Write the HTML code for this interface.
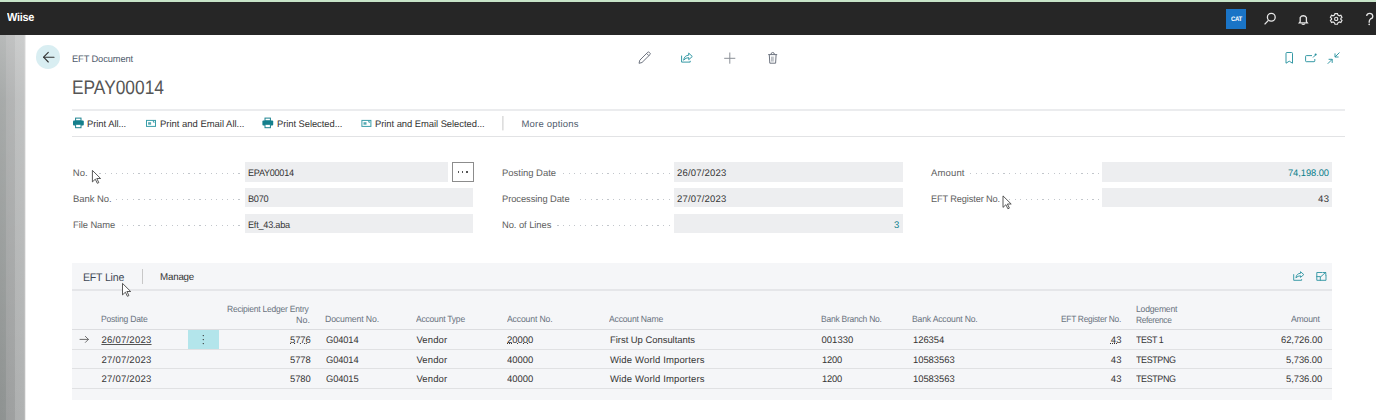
<!DOCTYPE html>
<html><head><meta charset="utf-8">
<style>
*{margin:0;padding:0;box-sizing:border-box}
html,body{width:1376px;height:420px;overflow:hidden;background:#fff;font-family:"Liberation Sans",sans-serif;color:#212121;position:relative}
.a{position:absolute}
.t{position:absolute;white-space:nowrap;font-family:"Liberation Sans",sans-serif;text-rendering:geometricPrecision}
.hl{position:absolute;height:1px;background:#e3e3e3}
.box{position:absolute;height:20px;background:#edeef0}
svg{position:absolute;overflow:visible}
</style></head><body>
<!-- top -->
<div class="a" style="left:0;top:0;width:1376px;height:2px;background:#c7e4c8"></div>
<div class="a" style="left:0;top:2px;width:1376px;height:33px;background:#262626"></div>
<div class="a" style="left:1226px;top:9px;width:20px;height:20px;background:#1a74c6"></div>
<svg style="left:0;top:0" width="1376" height="35">
  <g fill="none" stroke="#e8e8e8" stroke-width="1.3">
    <circle cx="1271.3" cy="17.3" r="3.9"/>
    <line x1="1264.6" y1="24.4" x2="1268.4" y2="20.4"/>
    <path d="M1299.3 22.8 L1300.2 21.6 V17.5 A3.6 3.6 0 0 1 1306.4 17.5 V21.6 L1307.3 22.8 Z"/>
    <path d="M1301.6 23.6 Q1303.3 25.2 1305 23.6"/>
    <path d="M1366.6 15.8 A3.1 2.8 0 1 1 1370.5 18.9 Q1369.2 19.9 1369.2 21.8 V22.7"/>
  </g>
  <circle cx="1369.2" cy="24.4" r="0.8" fill="#e8e8e8"/>
  <g transform="translate(1336.2 18.9) scale(0.95)" fill="none" stroke="#e8e8e8" stroke-width="1.2">
    <path d="M-1.3 -5.6 L1.3 -5.6 L1.8 -4.1 L3.4 -3.2 L4.9 -3.8 L6.1 -1.6 L4.9 -0.6 L4.9 0.6 L6.1 1.6 L4.9 3.8 L3.4 3.2 L1.8 4.1 L1.3 5.6 L-1.3 5.6 L-1.8 4.1 L-3.4 3.2 L-4.9 3.8 L-6.1 1.6 L-4.9 0.6 L-4.9 -0.6 L-6.1 -1.6 L-4.9 -3.8 L-3.4 -3.2 L-1.8 -4.1 Z"/>
    <circle r="1.7"/>
  </g>
</svg>
<!-- left strip -->
<div class="a" style="left:0;top:35px;width:25px;height:385px;background:linear-gradient(180deg,rgba(255,255,255,.36) 0px,rgba(255,255,255,.22) 65px,rgba(255,255,255,.0) 385px),linear-gradient(90deg,#8e9291 0px,#909493 6px,#9c9e9e 6px,#9fa1a1 15px,#adafaf 15px,#b0b2b2 24px,#c4c4c4 25px)"></div>
<div class="a" style="left:25px;top:35px;width:1px;height:385px;background:#ececec"></div>
<!-- header -->
<div class="a" style="left:36.2px;top:45.2px;width:23.6px;height:23.6px;border-radius:50%;background:#d9eef2"></div>
<svg style="left:0;top:0" width="1376" height="110">
  <g fill="none" stroke="#333" stroke-width="1.1" stroke-linecap="round" stroke-linejoin="round">
    <path d="M43.6 57.2 H54"/>
    <path d="M48.3 52.4 L43.6 57.2 L48.3 62"/>
  </g>
  <!-- pencil -->
  <g fill="none" stroke="#6e7480" stroke-width="1">
    <path d="M639 63.3 L639.8 60.2 L647.8 52.2 Q648.6 51.6 649.4 52.4 L650.1 53.1 Q650.7 53.9 650 54.6 L642 62.5 Z"/>
    <path d="M646.6 53.4 L648.9 55.7"/>
  </g>
  <!-- share -->
  <g fill="none" stroke="#2a93a0" stroke-width="0.95" stroke-linejoin="round">
    <path d="M681.6 55.6 V62.1 H690.2 V60.8"/>
    <path d="M683.6 60.2 Q684.4 55.4 688.7 55.2 V53.1 L692.3 56.5 L688.7 59.7 V57.6 Q685.8 57.6 683.6 60.2 Z"/>
  </g>
  <!-- plus -->
  <g stroke="#8a8f96" stroke-width="1">
    <path d="M724.2 58.3 H735.3"/>
    <path d="M729.8 52.5 V63.7"/>
  </g>
  <!-- trash -->
  <g fill="none" stroke="#6e7480" stroke-width="1">
    <path d="M768.2 54.6 H777.2"/>
    <path d="M769.3 54.8 L769.8 63.2 H775.6 L776.1 54.8"/>
    <path d="M771 54.4 Q771 52.5 772.7 52.5 Q774.4 52.5 774.4 54.4"/>
  </g>
  <rect x="771.3" y="56.6" width="1.3" height="5" fill="#9aa0a8"/>
  <rect x="772.8" y="56.6" width="1.3" height="5" fill="#c8ccd0"/>
  <!-- bookmark -->
  <g fill="none" stroke="#2a93a0" stroke-width="0.95" stroke-linejoin="round">
    <path d="M1286 63.2 V53.4 Q1286 52.5 1287 52.5 H1291.5 Q1292.5 52.5 1292.5 53.4 V63.2 L1289.25 61.2 Z"/>
  </g>
  <!-- popout -->
  <g fill="none" stroke="#2a93a0" stroke-width="0.95" stroke-linejoin="round">
    <path d="M1312 55.6 H1306.4 Q1305.6 55.6 1305.6 56.4 V60.9 Q1305.6 61.7 1306.4 61.7 H1314 Q1314.8 61.7 1314.8 60.9 V59"/>
    <path d="M1313 57.5 L1316 54.5"/>
  </g>
  <circle cx="1315.6" cy="54.6" r="1" fill="#2a93a0"/>
  <!-- collapse -->
  <g fill="none" stroke="#2a93a0" stroke-width="0.95" stroke-linecap="round" stroke-linejoin="round">
    <path d="M1339.2 52.8 L1335.2 56.8"/>
    <path d="M1335 53.8 V57 H1338.2"/>
    <path d="M1328 63.5 L1332 59.5"/>
    <path d="M1329 59.3 H1332.2 V62.5"/>
  </g>
</svg>
<div class="hl" style="left:72px;top:109px;width:1273px;height:2px;background:#ebecee"></div>
<div class="hl" style="left:72px;top:136px;width:1273px;background:#e2e3e5"></div>
<svg style="left:0;top:0" width="1376" height="140">
  <!-- printer icons -->
  <g>
    <rect x="75.6" y="118.1" width="5.4" height="2.8" fill="none" stroke="#1d8390" stroke-width="1"/>
    <rect x="73.0" y="120.6" width="10.8" height="4.8" rx="1" fill="#137f8c"/>
    <rect x="75.6" y="124.3" width="5.4" height="3.4" fill="#fff" stroke="#1d8390" stroke-width="1"/>
  </g>
  <g>
    <rect x="265.0" y="118.1" width="5.4" height="2.8" fill="none" stroke="#1d8390" stroke-width="1"/>
    <rect x="262.4" y="120.6" width="10.8" height="4.8" rx="1" fill="#137f8c"/>
    <rect x="265.0" y="124.3" width="5.4" height="3.4" fill="#fff" stroke="#1d8390" stroke-width="1"/>
  </g>
  <!-- email-doc icons -->
  <g fill="none" stroke="#3a9ea9" stroke-width="1">
    <rect x="146.5" y="120.4" width="9" height="6"/>
    <path d="M153.4 120.4 V122.2 H154.6"/>
  </g>
  <rect x="148.1" y="122.2" width="3" height="2.5" fill="#55aab3"/>
  <g fill="none" stroke="#3a9ea9" stroke-width="1">
    <rect x="361.9" y="120.4" width="9" height="6"/>
    <path d="M368.8 120.4 V122.2 H370.0"/>
  </g>
  <rect x="363.5" y="122.2" width="3" height="2.5" fill="#55aab3"/>
  <rect x="502.4" y="116" width="1" height="14.4" fill="#c8c8c8"/>
</svg>
<!-- fields -->
<div class="box" style="left:244.6px;top:162.2px;width:203.2px;height:19.6px"></div>
<div class="a" style="left:452px;top:162px;width:22px;height:20px;border:1px solid #8c8c8c;background:#fff"></div>
<div class="a" style="left:457.8px;top:171.4px;width:1.4px;height:1.4px;background:#555"></div>
<div class="a" style="left:462.1px;top:171.4px;width:1.4px;height:1.4px;background:#555"></div>
<div class="a" style="left:466.4px;top:171.4px;width:1.4px;height:1.4px;background:#555"></div>
<div class="box" style="left:244.6px;top:188.4px;width:228.9px;height:19px"></div>
<div class="box" style="left:244.6px;top:214.2px;width:228.9px;height:18.8px"></div>
<div class="box" style="left:673.6px;top:162.2px;width:229.6px;height:19.6px"></div>
<div class="box" style="left:673.6px;top:188.4px;width:229.6px;height:19px"></div>
<div class="box" style="left:673.6px;top:214.2px;width:229.6px;height:18.8px"></div>
<div class="box" style="left:1102.4px;top:162.2px;width:229.9px;height:19.6px"></div>
<div class="box" style="left:1102.4px;top:188.4px;width:229.9px;height:19px"></div>
<div class="a" style="left:238.40px;top:173px;width:1.2px;height:1px;background:#c2c6cb"></div>
<div class="a" style="left:232.84px;top:173px;width:1.2px;height:1px;background:#c2c6cb"></div>
<div class="a" style="left:227.28px;top:173px;width:1.2px;height:1px;background:#c2c6cb"></div>
<div class="a" style="left:221.72px;top:173px;width:1.2px;height:1px;background:#c2c6cb"></div>
<div class="a" style="left:216.16px;top:173px;width:1.2px;height:1px;background:#c2c6cb"></div>
<div class="a" style="left:210.60px;top:173px;width:1.2px;height:1px;background:#c2c6cb"></div>
<div class="a" style="left:205.04px;top:173px;width:1.2px;height:1px;background:#c2c6cb"></div>
<div class="a" style="left:199.48px;top:173px;width:1.2px;height:1px;background:#c2c6cb"></div>
<div class="a" style="left:193.92px;top:173px;width:1.2px;height:1px;background:#c2c6cb"></div>
<div class="a" style="left:188.36px;top:173px;width:1.2px;height:1px;background:#c2c6cb"></div>
<div class="a" style="left:182.80px;top:173px;width:1.2px;height:1px;background:#c2c6cb"></div>
<div class="a" style="left:177.24px;top:173px;width:1.2px;height:1px;background:#c2c6cb"></div>
<div class="a" style="left:171.68px;top:173px;width:1.2px;height:1px;background:#c2c6cb"></div>
<div class="a" style="left:166.12px;top:173px;width:1.2px;height:1px;background:#c2c6cb"></div>
<div class="a" style="left:160.56px;top:173px;width:1.2px;height:1px;background:#c2c6cb"></div>
<div class="a" style="left:155.00px;top:173px;width:1.2px;height:1px;background:#c2c6cb"></div>
<div class="a" style="left:149.44px;top:173px;width:1.2px;height:1px;background:#c2c6cb"></div>
<div class="a" style="left:143.88px;top:173px;width:1.2px;height:1px;background:#c2c6cb"></div>
<div class="a" style="left:138.32px;top:173px;width:1.2px;height:1px;background:#c2c6cb"></div>
<div class="a" style="left:132.76px;top:173px;width:1.2px;height:1px;background:#c2c6cb"></div>
<div class="a" style="left:127.20px;top:173px;width:1.2px;height:1px;background:#c2c6cb"></div>
<div class="a" style="left:121.64px;top:173px;width:1.2px;height:1px;background:#c2c6cb"></div>
<div class="a" style="left:116.08px;top:173px;width:1.2px;height:1px;background:#c2c6cb"></div>
<div class="a" style="left:110.52px;top:173px;width:1.2px;height:1px;background:#c2c6cb"></div>
<div class="a" style="left:104.96px;top:173px;width:1.2px;height:1px;background:#c2c6cb"></div>
<div class="a" style="left:99.40px;top:173px;width:1.2px;height:1px;background:#c2c6cb"></div>
<div class="a" style="left:238.40px;top:199px;width:1.2px;height:1px;background:#c2c6cb"></div>
<div class="a" style="left:232.84px;top:199px;width:1.2px;height:1px;background:#c2c6cb"></div>
<div class="a" style="left:227.28px;top:199px;width:1.2px;height:1px;background:#c2c6cb"></div>
<div class="a" style="left:221.72px;top:199px;width:1.2px;height:1px;background:#c2c6cb"></div>
<div class="a" style="left:216.16px;top:199px;width:1.2px;height:1px;background:#c2c6cb"></div>
<div class="a" style="left:210.60px;top:199px;width:1.2px;height:1px;background:#c2c6cb"></div>
<div class="a" style="left:205.04px;top:199px;width:1.2px;height:1px;background:#c2c6cb"></div>
<div class="a" style="left:199.48px;top:199px;width:1.2px;height:1px;background:#c2c6cb"></div>
<div class="a" style="left:193.92px;top:199px;width:1.2px;height:1px;background:#c2c6cb"></div>
<div class="a" style="left:188.36px;top:199px;width:1.2px;height:1px;background:#c2c6cb"></div>
<div class="a" style="left:182.80px;top:199px;width:1.2px;height:1px;background:#c2c6cb"></div>
<div class="a" style="left:177.24px;top:199px;width:1.2px;height:1px;background:#c2c6cb"></div>
<div class="a" style="left:171.68px;top:199px;width:1.2px;height:1px;background:#c2c6cb"></div>
<div class="a" style="left:166.12px;top:199px;width:1.2px;height:1px;background:#c2c6cb"></div>
<div class="a" style="left:160.56px;top:199px;width:1.2px;height:1px;background:#c2c6cb"></div>
<div class="a" style="left:155.00px;top:199px;width:1.2px;height:1px;background:#c2c6cb"></div>
<div class="a" style="left:149.44px;top:199px;width:1.2px;height:1px;background:#c2c6cb"></div>
<div class="a" style="left:143.88px;top:199px;width:1.2px;height:1px;background:#c2c6cb"></div>
<div class="a" style="left:138.32px;top:199px;width:1.2px;height:1px;background:#c2c6cb"></div>
<div class="a" style="left:132.76px;top:199px;width:1.2px;height:1px;background:#c2c6cb"></div>
<div class="a" style="left:127.20px;top:199px;width:1.2px;height:1px;background:#c2c6cb"></div>
<div class="a" style="left:121.64px;top:199px;width:1.2px;height:1px;background:#c2c6cb"></div>
<div class="a" style="left:116.08px;top:199px;width:1.2px;height:1px;background:#c2c6cb"></div>
<div class="a" style="left:238.40px;top:225px;width:1.2px;height:1px;background:#c2c6cb"></div>
<div class="a" style="left:232.84px;top:225px;width:1.2px;height:1px;background:#c2c6cb"></div>
<div class="a" style="left:227.28px;top:225px;width:1.2px;height:1px;background:#c2c6cb"></div>
<div class="a" style="left:221.72px;top:225px;width:1.2px;height:1px;background:#c2c6cb"></div>
<div class="a" style="left:216.16px;top:225px;width:1.2px;height:1px;background:#c2c6cb"></div>
<div class="a" style="left:210.60px;top:225px;width:1.2px;height:1px;background:#c2c6cb"></div>
<div class="a" style="left:205.04px;top:225px;width:1.2px;height:1px;background:#c2c6cb"></div>
<div class="a" style="left:199.48px;top:225px;width:1.2px;height:1px;background:#c2c6cb"></div>
<div class="a" style="left:193.92px;top:225px;width:1.2px;height:1px;background:#c2c6cb"></div>
<div class="a" style="left:188.36px;top:225px;width:1.2px;height:1px;background:#c2c6cb"></div>
<div class="a" style="left:182.80px;top:225px;width:1.2px;height:1px;background:#c2c6cb"></div>
<div class="a" style="left:177.24px;top:225px;width:1.2px;height:1px;background:#c2c6cb"></div>
<div class="a" style="left:171.68px;top:225px;width:1.2px;height:1px;background:#c2c6cb"></div>
<div class="a" style="left:166.12px;top:225px;width:1.2px;height:1px;background:#c2c6cb"></div>
<div class="a" style="left:160.56px;top:225px;width:1.2px;height:1px;background:#c2c6cb"></div>
<div class="a" style="left:155.00px;top:225px;width:1.2px;height:1px;background:#c2c6cb"></div>
<div class="a" style="left:149.44px;top:225px;width:1.2px;height:1px;background:#c2c6cb"></div>
<div class="a" style="left:143.88px;top:225px;width:1.2px;height:1px;background:#c2c6cb"></div>
<div class="a" style="left:138.32px;top:225px;width:1.2px;height:1px;background:#c2c6cb"></div>
<div class="a" style="left:132.76px;top:225px;width:1.2px;height:1px;background:#c2c6cb"></div>
<div class="a" style="left:127.20px;top:225px;width:1.2px;height:1px;background:#c2c6cb"></div>
<div class="a" style="left:121.64px;top:225px;width:1.2px;height:1px;background:#c2c6cb"></div>
<div class="a" style="left:668.60px;top:173px;width:1.2px;height:1px;background:#c2c6cb"></div>
<div class="a" style="left:663.04px;top:173px;width:1.2px;height:1px;background:#c2c6cb"></div>
<div class="a" style="left:657.48px;top:173px;width:1.2px;height:1px;background:#c2c6cb"></div>
<div class="a" style="left:651.92px;top:173px;width:1.2px;height:1px;background:#c2c6cb"></div>
<div class="a" style="left:646.36px;top:173px;width:1.2px;height:1px;background:#c2c6cb"></div>
<div class="a" style="left:640.80px;top:173px;width:1.2px;height:1px;background:#c2c6cb"></div>
<div class="a" style="left:635.24px;top:173px;width:1.2px;height:1px;background:#c2c6cb"></div>
<div class="a" style="left:629.68px;top:173px;width:1.2px;height:1px;background:#c2c6cb"></div>
<div class="a" style="left:624.12px;top:173px;width:1.2px;height:1px;background:#c2c6cb"></div>
<div class="a" style="left:618.56px;top:173px;width:1.2px;height:1px;background:#c2c6cb"></div>
<div class="a" style="left:613.00px;top:173px;width:1.2px;height:1px;background:#c2c6cb"></div>
<div class="a" style="left:607.44px;top:173px;width:1.2px;height:1px;background:#c2c6cb"></div>
<div class="a" style="left:601.88px;top:173px;width:1.2px;height:1px;background:#c2c6cb"></div>
<div class="a" style="left:596.32px;top:173px;width:1.2px;height:1px;background:#c2c6cb"></div>
<div class="a" style="left:590.76px;top:173px;width:1.2px;height:1px;background:#c2c6cb"></div>
<div class="a" style="left:585.20px;top:173px;width:1.2px;height:1px;background:#c2c6cb"></div>
<div class="a" style="left:579.64px;top:173px;width:1.2px;height:1px;background:#c2c6cb"></div>
<div class="a" style="left:574.08px;top:173px;width:1.2px;height:1px;background:#c2c6cb"></div>
<div class="a" style="left:568.52px;top:173px;width:1.2px;height:1px;background:#c2c6cb"></div>
<div class="a" style="left:562.96px;top:173px;width:1.2px;height:1px;background:#c2c6cb"></div>
<div class="a" style="left:668.60px;top:199px;width:1.2px;height:1px;background:#c2c6cb"></div>
<div class="a" style="left:663.04px;top:199px;width:1.2px;height:1px;background:#c2c6cb"></div>
<div class="a" style="left:657.48px;top:199px;width:1.2px;height:1px;background:#c2c6cb"></div>
<div class="a" style="left:651.92px;top:199px;width:1.2px;height:1px;background:#c2c6cb"></div>
<div class="a" style="left:646.36px;top:199px;width:1.2px;height:1px;background:#c2c6cb"></div>
<div class="a" style="left:640.80px;top:199px;width:1.2px;height:1px;background:#c2c6cb"></div>
<div class="a" style="left:635.24px;top:199px;width:1.2px;height:1px;background:#c2c6cb"></div>
<div class="a" style="left:629.68px;top:199px;width:1.2px;height:1px;background:#c2c6cb"></div>
<div class="a" style="left:624.12px;top:199px;width:1.2px;height:1px;background:#c2c6cb"></div>
<div class="a" style="left:618.56px;top:199px;width:1.2px;height:1px;background:#c2c6cb"></div>
<div class="a" style="left:613.00px;top:199px;width:1.2px;height:1px;background:#c2c6cb"></div>
<div class="a" style="left:607.44px;top:199px;width:1.2px;height:1px;background:#c2c6cb"></div>
<div class="a" style="left:601.88px;top:199px;width:1.2px;height:1px;background:#c2c6cb"></div>
<div class="a" style="left:596.32px;top:199px;width:1.2px;height:1px;background:#c2c6cb"></div>
<div class="a" style="left:590.76px;top:199px;width:1.2px;height:1px;background:#c2c6cb"></div>
<div class="a" style="left:585.20px;top:199px;width:1.2px;height:1px;background:#c2c6cb"></div>
<div class="a" style="left:579.64px;top:199px;width:1.2px;height:1px;background:#c2c6cb"></div>
<div class="a" style="left:668.60px;top:225px;width:1.2px;height:1px;background:#c2c6cb"></div>
<div class="a" style="left:663.04px;top:225px;width:1.2px;height:1px;background:#c2c6cb"></div>
<div class="a" style="left:657.48px;top:225px;width:1.2px;height:1px;background:#c2c6cb"></div>
<div class="a" style="left:651.92px;top:225px;width:1.2px;height:1px;background:#c2c6cb"></div>
<div class="a" style="left:646.36px;top:225px;width:1.2px;height:1px;background:#c2c6cb"></div>
<div class="a" style="left:640.80px;top:225px;width:1.2px;height:1px;background:#c2c6cb"></div>
<div class="a" style="left:635.24px;top:225px;width:1.2px;height:1px;background:#c2c6cb"></div>
<div class="a" style="left:629.68px;top:225px;width:1.2px;height:1px;background:#c2c6cb"></div>
<div class="a" style="left:624.12px;top:225px;width:1.2px;height:1px;background:#c2c6cb"></div>
<div class="a" style="left:618.56px;top:225px;width:1.2px;height:1px;background:#c2c6cb"></div>
<div class="a" style="left:613.00px;top:225px;width:1.2px;height:1px;background:#c2c6cb"></div>
<div class="a" style="left:607.44px;top:225px;width:1.2px;height:1px;background:#c2c6cb"></div>
<div class="a" style="left:601.88px;top:225px;width:1.2px;height:1px;background:#c2c6cb"></div>
<div class="a" style="left:596.32px;top:225px;width:1.2px;height:1px;background:#c2c6cb"></div>
<div class="a" style="left:590.76px;top:225px;width:1.2px;height:1px;background:#c2c6cb"></div>
<div class="a" style="left:585.20px;top:225px;width:1.2px;height:1px;background:#c2c6cb"></div>
<div class="a" style="left:579.64px;top:225px;width:1.2px;height:1px;background:#c2c6cb"></div>
<div class="a" style="left:574.08px;top:225px;width:1.2px;height:1px;background:#c2c6cb"></div>
<div class="a" style="left:568.52px;top:225px;width:1.2px;height:1px;background:#c2c6cb"></div>
<div class="a" style="left:562.96px;top:225px;width:1.2px;height:1px;background:#c2c6cb"></div>
<div class="a" style="left:557.40px;top:225px;width:1.2px;height:1px;background:#c2c6cb"></div>
<div class="a" style="left:1098.00px;top:173px;width:1.2px;height:1px;background:#c2c6cb"></div>
<div class="a" style="left:1092.44px;top:173px;width:1.2px;height:1px;background:#c2c6cb"></div>
<div class="a" style="left:1086.88px;top:173px;width:1.2px;height:1px;background:#c2c6cb"></div>
<div class="a" style="left:1081.32px;top:173px;width:1.2px;height:1px;background:#c2c6cb"></div>
<div class="a" style="left:1075.76px;top:173px;width:1.2px;height:1px;background:#c2c6cb"></div>
<div class="a" style="left:1070.20px;top:173px;width:1.2px;height:1px;background:#c2c6cb"></div>
<div class="a" style="left:1064.64px;top:173px;width:1.2px;height:1px;background:#c2c6cb"></div>
<div class="a" style="left:1059.08px;top:173px;width:1.2px;height:1px;background:#c2c6cb"></div>
<div class="a" style="left:1053.52px;top:173px;width:1.2px;height:1px;background:#c2c6cb"></div>
<div class="a" style="left:1047.96px;top:173px;width:1.2px;height:1px;background:#c2c6cb"></div>
<div class="a" style="left:1042.40px;top:173px;width:1.2px;height:1px;background:#c2c6cb"></div>
<div class="a" style="left:1036.84px;top:173px;width:1.2px;height:1px;background:#c2c6cb"></div>
<div class="a" style="left:1031.28px;top:173px;width:1.2px;height:1px;background:#c2c6cb"></div>
<div class="a" style="left:1025.72px;top:173px;width:1.2px;height:1px;background:#c2c6cb"></div>
<div class="a" style="left:1020.16px;top:173px;width:1.2px;height:1px;background:#c2c6cb"></div>
<div class="a" style="left:1014.60px;top:173px;width:1.2px;height:1px;background:#c2c6cb"></div>
<div class="a" style="left:1009.04px;top:173px;width:1.2px;height:1px;background:#c2c6cb"></div>
<div class="a" style="left:1003.48px;top:173px;width:1.2px;height:1px;background:#c2c6cb"></div>
<div class="a" style="left:997.92px;top:173px;width:1.2px;height:1px;background:#c2c6cb"></div>
<div class="a" style="left:992.36px;top:173px;width:1.2px;height:1px;background:#c2c6cb"></div>
<div class="a" style="left:986.80px;top:173px;width:1.2px;height:1px;background:#c2c6cb"></div>
<div class="a" style="left:981.24px;top:173px;width:1.2px;height:1px;background:#c2c6cb"></div>
<div class="a" style="left:975.68px;top:173px;width:1.2px;height:1px;background:#c2c6cb"></div>
<div class="a" style="left:970.12px;top:173px;width:1.2px;height:1px;background:#c2c6cb"></div>
<div class="a" style="left:1098.00px;top:199px;width:1.2px;height:1px;background:#c2c6cb"></div>
<div class="a" style="left:1092.44px;top:199px;width:1.2px;height:1px;background:#c2c6cb"></div>
<div class="a" style="left:1086.88px;top:199px;width:1.2px;height:1px;background:#c2c6cb"></div>
<div class="a" style="left:1081.32px;top:199px;width:1.2px;height:1px;background:#c2c6cb"></div>
<div class="a" style="left:1075.76px;top:199px;width:1.2px;height:1px;background:#c2c6cb"></div>
<div class="a" style="left:1070.20px;top:199px;width:1.2px;height:1px;background:#c2c6cb"></div>
<div class="a" style="left:1064.64px;top:199px;width:1.2px;height:1px;background:#c2c6cb"></div>
<div class="a" style="left:1059.08px;top:199px;width:1.2px;height:1px;background:#c2c6cb"></div>
<div class="a" style="left:1053.52px;top:199px;width:1.2px;height:1px;background:#c2c6cb"></div>
<div class="a" style="left:1047.96px;top:199px;width:1.2px;height:1px;background:#c2c6cb"></div>
<div class="a" style="left:1042.40px;top:199px;width:1.2px;height:1px;background:#c2c6cb"></div>
<div class="a" style="left:1036.84px;top:199px;width:1.2px;height:1px;background:#c2c6cb"></div>
<div class="a" style="left:1031.28px;top:199px;width:1.2px;height:1px;background:#c2c6cb"></div>
<div class="a" style="left:1025.72px;top:199px;width:1.2px;height:1px;background:#c2c6cb"></div>
<div class="a" style="left:1020.16px;top:199px;width:1.2px;height:1px;background:#c2c6cb"></div>
<div class="a" style="left:1014.60px;top:199px;width:1.2px;height:1px;background:#c2c6cb"></div>
<div class="a" style="left:1009.04px;top:199px;width:1.2px;height:1px;background:#c2c6cb"></div>
<!-- subpage -->
<div class="a" style="left:72px;top:263px;width:1260px;height:137px;background:#f5f6f8"></div>
<div class="a" style="left:141.6px;top:269px;width:1px;height:15px;background:#c8c8c8"></div>
<div class="a" style="left:72px;top:289px;width:1260px;height:2px;background:#e5e6e9"></div>
<div class="a" style="left:72px;top:329px;width:1260px;height:1px;background:#dcdde0"></div>
<div class="a" style="left:72px;top:349px;width:1260px;height:1px;background:#e0e1e3"></div>
<div class="a" style="left:72px;top:368px;width:1260px;height:1px;background:#e0e1e3"></div>
<div class="a" style="left:72px;top:388px;width:1260px;height:1px;background:#e0e1e3"></div>
<div class="a" style="left:188px;top:330.3px;width:30.6px;height:18.6px;background:#b3e5eb"></div>
<svg style="left:0;top:0" width="1376" height="420">
  <g fill="#333">
    <circle cx="203.3" cy="335.6" r="0.7"/>
    <circle cx="203.3" cy="339.6" r="0.7"/>
    <circle cx="203.3" cy="343.6" r="0.7"/>
  </g>
  <g fill="none" stroke="#666" stroke-width="0.95" stroke-linecap="round" stroke-linejoin="round">
    <path d="M80 339.4 H88.4"/>
    <path d="M85.4 336.4 L88.4 339.4 L85.4 342.4"/>
  </g>
  <!-- subpage share -->
  <g fill="none" stroke="#2a93a0" stroke-width="0.9" stroke-linejoin="round">
    <path d="M1293.7 274.2 V280.3 H1301.6 V279.2"/>
    <path d="M1295.9 277.8 Q1296.6 273.5 1300.5 273.3 V271.7 L1303.8 274.6 L1300.5 277.4 V275.8 Q1298 275.8 1295.9 277.8 Z"/>
  </g>
  <!-- subpage expand -->
  <g fill="none" stroke="#2a93a0" stroke-width="0.9" stroke-linejoin="round" stroke-linecap="round">
    <path d="M1322 272.5 H1316.8 V280.3 H1326 V275.5"/>
    <path d="M1316.8 276.6 H1320.3 V280.3"/>
    <path d="M1320.5 277 L1325.5 272.5"/>
    <path d="M1323 272.5 H1325.8 V275.2"/>
  </g>
</svg>
<div class="t" style="left:7.40px;top:13.00px;font-size:11.5px;line-height:11.5px;color:#ffffff;letter-spacing:-0.338px;transform:scaleX(0.9543);transform-origin:0 0;font-weight:bold;">Wiise</div>
<div class="t" style="left:1230.70px;top:17.00px;font-size:6.5px;line-height:6.5px;color:#ffffff;letter-spacing:-0.442px;transform:scaleX(0.9316);transform-origin:0 0;font-weight:bold;">CAT</div>
<div class="t" style="left:72.40px;top:55.00px;font-size:9.5px;line-height:9.5px;color:#505c6d;letter-spacing:-0.121px;transform:scaleX(0.9792);transform-origin:0 0;">EFT Document</div>
<div class="t" style="left:71.51px;top:79.00px;font-size:19.5px;line-height:19.5px;color:#555555;letter-spacing:0.000px;transform:scaleX(0.8897);transform-origin:0 0;font-weight:normal">EPAY00014</div>
<div class="t" style="left:86.90px;top:120.00px;font-size:9.5px;line-height:9.5px;color:#333333;letter-spacing:-0.042px;transform:scaleX(0.9886);transform-origin:0 0;">Print All...</div>
<div class="t" style="left:159.60px;top:120.00px;font-size:9.5px;line-height:9.5px;color:#333333;letter-spacing:-0.014px;transform:scaleX(0.9965);transform-origin:0 0;">Print and Email All...</div>
<div class="t" style="left:276.90px;top:120.00px;font-size:9.5px;line-height:9.5px;color:#333333;letter-spacing:-0.054px;transform:scaleX(0.9870);transform-origin:0 0;">Print Selected...</div>
<div class="t" style="left:375.00px;top:120.00px;font-size:9.5px;line-height:9.5px;color:#333333;letter-spacing:-0.045px;transform:scaleX(0.9896);transform-origin:0 0;">Print and Email Selected...</div>
<div class="t" style="left:521.50px;top:120.00px;font-size:9.5px;line-height:9.5px;color:#505c6d;letter-spacing:0.185px;">More options</div>
<div class="t" style="left:72.70px;top:169.00px;font-size:9.5px;line-height:9.5px;color:#5e5e5e;letter-spacing:0.078px;">No.</div>
<div class="t" style="left:72.70px;top:195.00px;font-size:9.5px;line-height:9.5px;color:#5e5e5e;letter-spacing:-0.024px;transform:scaleX(0.9956);transform-origin:0 0;">Bank No.</div>
<div class="t" style="left:72.70px;top:221.00px;font-size:9.5px;line-height:9.5px;color:#5e5e5e;letter-spacing:-0.069px;transform:scaleX(0.9871);transform-origin:0 0;">File Name</div>
<div class="t" style="left:502.00px;top:169.00px;font-size:9.5px;line-height:9.5px;color:#5e5e5e;letter-spacing:-0.014px;transform:scaleX(0.9971);transform-origin:0 0;">Posting Date</div>
<div class="t" style="left:502.00px;top:195.00px;font-size:9.5px;line-height:9.5px;color:#5e5e5e;letter-spacing:-0.076px;transform:scaleX(0.9846);transform-origin:0 0;">Processing Date</div>
<div class="t" style="left:502.00px;top:221.00px;font-size:9.5px;line-height:9.5px;color:#5e5e5e;letter-spacing:-0.062px;transform:scaleX(0.9867);transform-origin:0 0;">No. of Lines</div>
<div class="t" style="left:931.00px;top:169.00px;font-size:9.5px;line-height:9.5px;color:#5e5e5e;letter-spacing:0.140px;">Amount</div>
<div class="t" style="left:931.00px;top:195.00px;font-size:9.5px;line-height:9.5px;color:#5e5e5e;letter-spacing:-0.137px;transform:scaleX(0.9718);transform-origin:0 0;">EFT Register No.</div>
<div class="t" style="left:248.40px;top:169.00px;font-size:9.5px;line-height:9.5px;color:#353535;letter-spacing:-0.279px;transform:scaleX(0.9554);transform-origin:0 0;">EPAY00014</div>
<div class="t" style="left:248.40px;top:195.00px;font-size:9.5px;line-height:9.5px;color:#353535;letter-spacing:-0.255px;transform:scaleX(0.9651);transform-origin:0 0;">B070</div>
<div class="t" style="left:248.40px;top:221.00px;font-size:9.5px;line-height:9.5px;color:#353535;letter-spacing:-0.220px;transform:scaleX(0.9576);transform-origin:0 0;">Eft_43.aba</div>
<div class="t" style="left:677.00px;top:169.00px;font-size:9.5px;line-height:9.5px;color:#353535;letter-spacing:0.193px;">26/07/2023</div>
<div class="t" style="left:677.00px;top:195.00px;font-size:9.5px;line-height:9.5px;color:#353535;letter-spacing:0.193px;">27/07/2023</div>
<div class="t" style="left:894.00px;top:221.00px;font-size:9.5px;line-height:9.5px;color:#0b808c;letter-spacing:0.000px;">3</div>
<div class="t" style="left:1288.00px;top:169.00px;font-size:9.5px;line-height:9.5px;color:#0b808c;letter-spacing:-0.081px;transform:scaleX(0.9846);transform-origin:0 0;">74,198.00</div>
<div class="t" style="left:1318.00px;top:195.00px;font-size:9.5px;line-height:9.5px;color:#353535;letter-spacing:0.417px;">43</div>
<div class="t" style="left:82.50px;top:273.00px;font-size:11px;line-height:11px;color:#3d4654;letter-spacing:-0.226px;transform:scaleX(0.9644);transform-origin:0 0;">EFT Line</div>
<div class="t" style="left:160.30px;top:273.00px;font-size:10px;line-height:10px;color:#333333;letter-spacing:-0.190px;transform:scaleX(0.9740);transform-origin:0 0;">Manage</div>
<div class="t" style="left:100.70px;top:315.00px;font-size:9px;line-height:9px;color:#6a7380;letter-spacing:-0.225px;transform:scaleX(0.9520);transform-origin:0 0;">Posting Date</div>
<div class="t" style="left:227.20px;top:305.00px;font-size:9px;line-height:9px;color:#6a7380;letter-spacing:-0.241px;transform:scaleX(0.9450);transform-origin:0 0;">Recipient Ledger Entry</div>
<div class="t" style="left:295.90px;top:316.00px;font-size:9px;line-height:9px;color:#6a7380;letter-spacing:0.000px;">No.</div>
<div class="t" style="left:324.80px;top:315.00px;font-size:9px;line-height:9px;color:#6a7380;letter-spacing:-0.158px;transform:scaleX(0.9695);transform-origin:0 0;">Document No.</div>
<div class="t" style="left:415.80px;top:315.00px;font-size:9px;line-height:9px;color:#6a7380;letter-spacing:-0.244px;transform:scaleX(0.9509);transform-origin:0 0;">Account Type</div>
<div class="t" style="left:506.50px;top:315.00px;font-size:9px;line-height:9px;color:#6a7380;letter-spacing:-0.174px;transform:scaleX(0.9641);transform-origin:0 0;">Account No.</div>
<div class="t" style="left:609.30px;top:315.00px;font-size:9px;line-height:9px;color:#6a7380;letter-spacing:-0.224px;transform:scaleX(0.9583);transform-origin:0 0;">Account Name</div>
<div class="t" style="left:821.00px;top:315.00px;font-size:9px;line-height:9px;color:#6a7380;letter-spacing:-0.258px;transform:scaleX(0.9465);transform-origin:0 0;">Bank Branch No.</div>
<div class="t" style="left:911.70px;top:315.00px;font-size:9px;line-height:9px;color:#6a7380;letter-spacing:-0.199px;transform:scaleX(0.9583);transform-origin:0 0;">Bank Account No.</div>
<div class="t" style="left:1060.70px;top:315.00px;font-size:9px;line-height:9px;color:#6a7380;letter-spacing:-0.311px;transform:scaleX(0.9324);transform-origin:0 0;">EFT Register No.</div>
<div class="t" style="left:1136.00px;top:305.00px;font-size:9px;line-height:9px;color:#6a7380;letter-spacing:-0.232px;transform:scaleX(0.9593);transform-origin:0 0;">Lodgement</div>
<div class="t" style="left:1136.00px;top:316.00px;font-size:9px;line-height:9px;color:#6a7380;letter-spacing:-0.371px;transform:scaleX(0.9286);transform-origin:0 0;">Reference</div>
<div class="t" style="left:1290.70px;top:315.00px;font-size:9px;line-height:9px;color:#6a7380;letter-spacing:-0.226px;transform:scaleX(0.9642);transform-origin:0 0;">Amount</div>
<div class="t" style="left:101.40px;top:336.00px;font-size:9.5px;line-height:9.5px;color:#353535;letter-spacing:0.260px;text-decoration:underline;text-decoration-color:#555;text-underline-offset:1px">26/07/2023</div>
<div class="t" style="left:290.10px;top:336.00px;font-size:9.5px;line-height:9.5px;color:#353535;letter-spacing:-0.075px;transform:scaleX(0.9891);transform-origin:0 0;text-decoration:underline dotted #333;text-underline-offset:0px">5776</div>
<div class="t" style="left:325.70px;top:336.00px;font-size:9.5px;line-height:9.5px;color:#353535;letter-spacing:-0.123px;transform:scaleX(0.9816);transform-origin:0 0;">G04014</div>
<div class="t" style="left:416.40px;top:336.00px;font-size:9.5px;line-height:9.5px;color:#353535;letter-spacing:0.131px;">Vendor</div>
<div class="t" style="left:507.00px;top:336.00px;font-size:9.5px;line-height:9.5px;color:#353535;letter-spacing:-0.017px;transform:scaleX(0.9974);transform-origin:0 0;text-decoration:underline dotted #333;text-underline-offset:0px">20000</div>
<div class="t" style="left:610.00px;top:336.00px;font-size:9.5px;line-height:9.5px;color:#353535;letter-spacing:-0.027px;transform:scaleX(0.9942);transform-origin:0 0;">First Up Consultants</div>
<div class="t" style="left:821.50px;top:336.00px;font-size:9.5px;line-height:9.5px;color:#353535;letter-spacing:0.017px;">001330</div>
<div class="t" style="left:913.00px;top:336.00px;font-size:9.5px;line-height:9.5px;color:#353535;letter-spacing:-0.042px;transform:scaleX(0.9933);transform-origin:0 0;">126354</div>
<div class="t" style="left:1110.80px;top:336.00px;font-size:9.5px;line-height:9.5px;color:#353535;letter-spacing:0.117px;text-decoration:underline dotted #333;text-underline-offset:0px">43</div>
<div class="t" style="left:1136.40px;top:336.00px;font-size:9.5px;line-height:9.5px;color:#353535;letter-spacing:-0.448px;transform:scaleX(0.9299);transform-origin:0 0;">TEST 1</div>
<div class="t" style="left:1280.70px;top:336.00px;font-size:9.5px;line-height:9.5px;color:#353535;letter-spacing:-0.055px;transform:scaleX(0.9895);transform-origin:0 0;">62,726.00</div>
<div class="t" style="left:101.40px;top:356.00px;font-size:9.5px;line-height:9.5px;color:#353535;letter-spacing:0.260px;">27/07/2023</div>
<div class="t" style="left:290.10px;top:356.00px;font-size:9.5px;line-height:9.5px;color:#353535;letter-spacing:-0.075px;transform:scaleX(0.9891);transform-origin:0 0;">5778</div>
<div class="t" style="left:325.70px;top:356.00px;font-size:9.5px;line-height:9.5px;color:#353535;letter-spacing:-0.123px;transform:scaleX(0.9816);transform-origin:0 0;">G04014</div>
<div class="t" style="left:416.40px;top:356.00px;font-size:9.5px;line-height:9.5px;color:#353535;letter-spacing:0.131px;">Vendor</div>
<div class="t" style="left:507.00px;top:356.00px;font-size:9.5px;line-height:9.5px;color:#353535;letter-spacing:-0.017px;transform:scaleX(0.9974);transform-origin:0 0;">40000</div>
<div class="t" style="left:610.00px;top:356.00px;font-size:9.5px;line-height:9.5px;color:#353535;letter-spacing:0.146px;">Wide World Importers</div>
<div class="t" style="left:821.50px;top:356.00px;font-size:9.5px;line-height:9.5px;color:#353535;letter-spacing:-0.143px;transform:scaleX(0.9794);transform-origin:0 0;">1200</div>
<div class="t" style="left:913.00px;top:356.00px;font-size:9.5px;line-height:9.5px;color:#353535;letter-spacing:-0.042px;transform:scaleX(0.9930);transform-origin:0 0;">10583563</div>
<div class="t" style="left:1110.80px;top:356.00px;font-size:9.5px;line-height:9.5px;color:#353535;letter-spacing:0.117px;">43</div>
<div class="t" style="left:1136.40px;top:356.00px;font-size:9.5px;line-height:9.5px;color:#353535;letter-spacing:-0.418px;transform:scaleX(0.9436);transform-origin:0 0;">TESTPNG</div>
<div class="t" style="left:1285.80px;top:356.00px;font-size:9.5px;line-height:9.5px;color:#353535;letter-spacing:-0.050px;transform:scaleX(0.9905);transform-origin:0 0;">5,736.00</div>
<div class="t" style="left:101.40px;top:375.00px;font-size:9.5px;line-height:9.5px;color:#353535;letter-spacing:0.260px;">27/07/2023</div>
<div class="t" style="left:290.10px;top:375.00px;font-size:9.5px;line-height:9.5px;color:#353535;letter-spacing:-0.075px;transform:scaleX(0.9891);transform-origin:0 0;">5780</div>
<div class="t" style="left:325.70px;top:375.00px;font-size:9.5px;line-height:9.5px;color:#353535;letter-spacing:-0.123px;transform:scaleX(0.9816);transform-origin:0 0;">G04015</div>
<div class="t" style="left:416.40px;top:375.00px;font-size:9.5px;line-height:9.5px;color:#353535;letter-spacing:0.131px;">Vendor</div>
<div class="t" style="left:507.00px;top:375.00px;font-size:9.5px;line-height:9.5px;color:#353535;letter-spacing:-0.017px;transform:scaleX(0.9974);transform-origin:0 0;">40000</div>
<div class="t" style="left:610.00px;top:375.00px;font-size:9.5px;line-height:9.5px;color:#353535;letter-spacing:0.146px;">Wide World Importers</div>
<div class="t" style="left:821.50px;top:375.00px;font-size:9.5px;line-height:9.5px;color:#353535;letter-spacing:-0.143px;transform:scaleX(0.9794);transform-origin:0 0;">1200</div>
<div class="t" style="left:913.00px;top:375.00px;font-size:9.5px;line-height:9.5px;color:#353535;letter-spacing:-0.042px;transform:scaleX(0.9930);transform-origin:0 0;">10583563</div>
<div class="t" style="left:1110.80px;top:375.00px;font-size:9.5px;line-height:9.5px;color:#353535;letter-spacing:0.117px;">43</div>
<div class="t" style="left:1136.40px;top:375.00px;font-size:9.5px;line-height:9.5px;color:#353535;letter-spacing:-0.418px;transform:scaleX(0.9436);transform-origin:0 0;">TESTPNG</div>
<div class="t" style="left:1285.80px;top:375.00px;font-size:9.5px;line-height:9.5px;color:#353535;letter-spacing:-0.050px;transform:scaleX(0.9905);transform-origin:0 0;">5,736.00</div>
<svg style="left:0;top:0" width="1376" height="420"><path d="M92.40 170.40 L92.40 181.90 L95.30 179.20 L97.30 183.30 L98.80 182.60 L96.80 178.50 L100.60 178.50 Z" fill="#fff" stroke="#3c3c3c" stroke-width="0.85" stroke-linejoin="miter"/></svg><svg style="left:0;top:0" width="1376" height="420"><path d="M1003.00 195.90 L1003.00 207.40 L1005.90 204.70 L1007.90 208.80 L1009.40 208.10 L1007.40 204.00 L1011.20 204.00 Z" fill="#fff" stroke="#3c3c3c" stroke-width="0.85" stroke-linejoin="miter"/></svg><svg style="left:0;top:0" width="1376" height="420"><path d="M122.50 283.40 L122.50 294.90 L125.40 292.20 L127.40 296.30 L128.90 295.60 L126.90 291.50 L130.70 291.50 Z" fill="#fff" stroke="#3c3c3c" stroke-width="0.85" stroke-linejoin="miter"/></svg>
</body></html>
